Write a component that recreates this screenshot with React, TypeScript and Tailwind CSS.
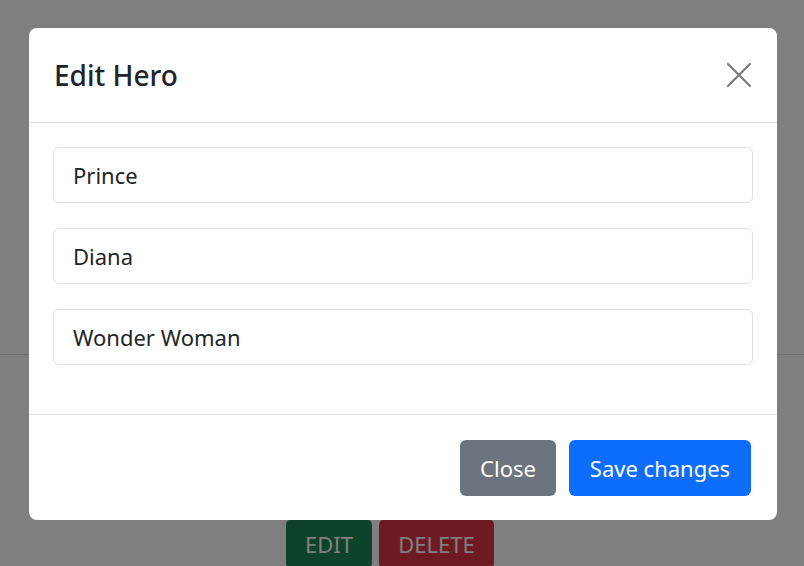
const fields = ['Prince', 'Diana', 'Wonder Woman']

export default function App() {
  return (
    <div className="relative w-[804px] h-[566px] overflow-hidden bg-white font-['Noto_Sans',sans-serif] text-[#212529]">
      {/* page behind the modal */}
      <div className="h-[355px] border-b border-[#dee2e6]" />
      <div className="flex gap-[7px] pl-[286px] pt-[164px]">
        <button className="h-[50px] w-[86px] rounded-[6px] bg-[#198754] text-[22px] text-white">EDIT</button>
        <button className="h-[50px] w-[115px] rounded-[6px] bg-[#dc3545] text-[22px] text-white">DELETE</button>
      </div>

      {/* backdrop + modal */}
      <div className="absolute inset-0 bg-black/50">
        <div className="ml-[29px] mt-[28px] w-[748px] rounded-[8px] bg-white">
          <div className="flex h-[95px] items-center justify-between border-b border-[#dee2e6] pl-[25px] pr-[25px]">
            <h5 className="text-[28px] font-medium leading-none">Edit Hero</h5>
            <button className="flex h-[26px] w-[26px] items-center justify-center">
              <svg viewBox="0 0 26 26" width="26" height="26" fill="none" stroke="#7a7a7a" strokeWidth="2.2" strokeLinecap="round">
                <path d="M2 2L24 24M24 2L2 24" />
              </svg>
            </button>
          </div>

          <div className="flex flex-col gap-[25px] px-[24px] pt-[24px] pb-[49px]">
            {fields.map(v => (
              <div
                key={v}
                className="flex h-[56px] items-center rounded-[6px] border border-[#dee2e6] px-[19px] text-[22px]"
              >
                {v}
              </div>
            ))}
          </div>

          <div className="flex justify-end gap-[13px] border-t border-[#dee2e6] px-[26px] pt-[25px] pb-[24px]">
            <button className="h-[56px] w-[96px] rounded-[6px] bg-[#6c757d] text-[22px] text-white">Close</button>
            <button className="h-[56px] w-[182px] rounded-[6px] bg-[#0d6efd] text-[22px] text-white">Save changes</button>
          </div>
        </div>
      </div>
    </div>
  )
}
